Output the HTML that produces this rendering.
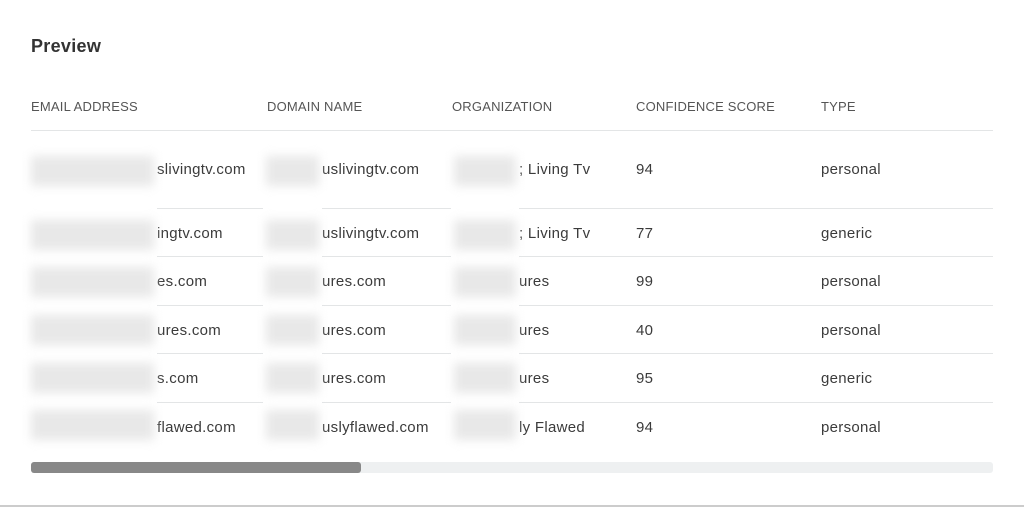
<!DOCTYPE html>
<html><head><style>
body{margin:0;width:1024px;height:507px;background:#fff;font-family:"Liberation Sans",sans-serif;position:relative;overflow:hidden;color:#3b3b3b}
.a{position:absolute;white-space:nowrap}
.t{font-size:18px;font-weight:bold;color:#333;left:31px;top:36px;letter-spacing:.3px}
.h{font-size:13px;color:#555;top:99px;letter-spacing:.2px}
.l{position:absolute;left:31px;width:962px;height:1px;background:#e3e5e6}
.c{font-size:15px;line-height:18px;letter-spacing:.3px}
.b{position:absolute;background:#fff}
.b i{position:absolute;left:3px;right:3px;height:30px;background:#e8e8e8;filter:blur(5px)}
</style></head><body>
<div class="a t">Preview</div>
<div class="a h" style="left:31px">EMAIL ADDRESS</div>
<div class="a h" style="left:267px">DOMAIN NAME</div>
<div class="a h" style="left:452px">ORGANIZATION</div>
<div class="a h" style="left:636px">CONFIDENCE SCORE</div>
<div class="a h" style="left:821px">TYPE</div>
<div class="l" style="top:130px"></div>
<div class="l" style="top:208px"></div>
<div class="l" style="top:256px"></div>
<div class="l" style="top:305px"></div>
<div class="l" style="top:353px"></div>
<div class="l" style="top:402px"></div>

<div class="a c" style="left:157px;top:161px">slivingtv.com</div>
<div class="a c" style="left:322px;top:161px">uslivingtv.com</div>
<div class="a c" style="left:519px;top:161px">; Living Tv</div>
<div class="a c" style="left:636px;top:161px">94</div>
<div class="a c" style="left:821px;top:161px">personal</div>

<div class="a c" style="left:157px;top:225px">ingtv.com</div>
<div class="a c" style="left:322px;top:225px">uslivingtv.com</div>
<div class="a c" style="left:519px;top:225px">; Living Tv</div>
<div class="a c" style="left:636px;top:225px">77</div>
<div class="a c" style="left:821px;top:225px">generic</div>

<div class="a c" style="left:157px;top:273px">es.com</div>
<div class="a c" style="left:322px;top:273px">ures.com</div>
<div class="a c" style="left:519px;top:273px">ures</div>
<div class="a c" style="left:636px;top:273px">99</div>
<div class="a c" style="left:821px;top:273px">personal</div>

<div class="a c" style="left:157px;top:322px">ures.com</div>
<div class="a c" style="left:322px;top:322px">ures.com</div>
<div class="a c" style="left:519px;top:322px">ures</div>
<div class="a c" style="left:636px;top:322px">40</div>
<div class="a c" style="left:821px;top:322px">personal</div>

<div class="a c" style="left:157px;top:370px">s.com</div>
<div class="a c" style="left:322px;top:370px">ures.com</div>
<div class="a c" style="left:519px;top:370px">ures</div>
<div class="a c" style="left:636px;top:370px">95</div>
<div class="a c" style="left:821px;top:370px">generic</div>

<div class="a c" style="left:157px;top:419px">flawed.com</div>
<div class="a c" style="left:322px;top:419px">uslyflawed.com</div>
<div class="a c" style="left:519px;top:419px">ly Flawed</div>
<div class="a c" style="left:636px;top:419px">94</div>
<div class="a c" style="left:821px;top:419px">personal</div>

<div class="b" style="left:28px;top:150px;width:129px;height:292px"><i style="top:6px"></i><i style="top:70px"></i><i style="top:117px"></i><i style="top:165px"></i><i style="top:213px"></i><i style="top:260px"></i></div>
<div class="b" style="left:263px;top:150px;width:59px;height:292px"><i style="top:6px"></i><i style="top:70px"></i><i style="top:117px"></i><i style="top:165px"></i><i style="top:213px"></i><i style="top:260px"></i></div>
<div class="b" style="left:451px;top:150px;width:68px;height:292px"><i style="top:6px"></i><i style="top:70px"></i><i style="top:117px"></i><i style="top:165px"></i><i style="top:213px"></i><i style="top:260px"></i></div>

<div style="position:absolute;left:31px;top:462px;width:962px;height:11px;background:#eef0f1;border-radius:3px"></div>
<div style="position:absolute;left:31px;top:462px;width:330px;height:11px;background:#888;border-radius:3px"></div>
<div style="position:absolute;left:0;top:505px;width:1024px;height:2px;background:#ccc"></div>
</body></html>
